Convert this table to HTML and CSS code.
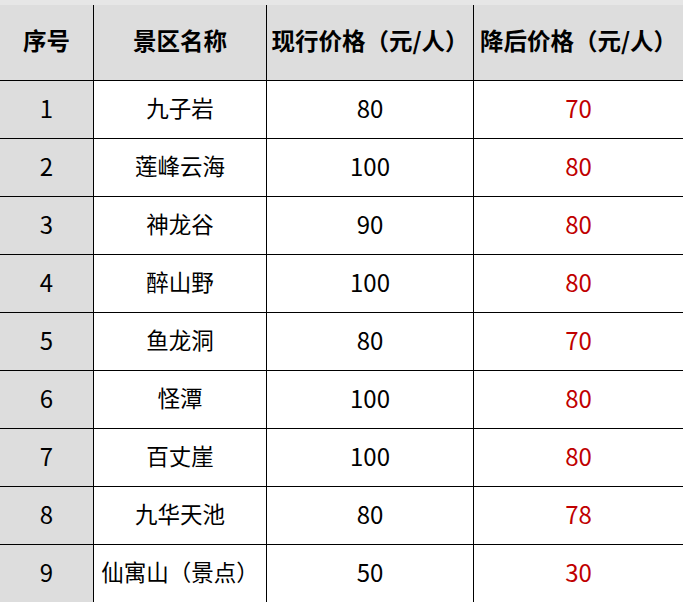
FILE: index.html
```html
<!DOCTYPE html>
<html lang="zh-CN">
<head>
<meta charset="utf-8">
<title>景区价格表</title>
<link rel="stylesheet" href="styles.css">
</head>
<body>
<div class="strip"></div>
<div class="grid">
  <div class="cell head">序号</div>
  <div class="cell head">景区名称</div>
  <div class="cell head">现行价格（元/人）</div>
  <div class="cell head last">降后价格（元/人）</div>

  <div class="cell idx num">1</div><div class="cell">九子岩</div><div class="cell num">80</div><div class="cell num red last">70</div>
  <div class="cell idx num">2</div><div class="cell">莲峰云海</div><div class="cell num">100</div><div class="cell num red last">80</div>
  <div class="cell idx num">3</div><div class="cell">神龙谷</div><div class="cell num">90</div><div class="cell num red last">80</div>
  <div class="cell idx num">4</div><div class="cell">醉山野</div><div class="cell num">100</div><div class="cell num red last">80</div>
  <div class="cell idx num">5</div><div class="cell">鱼龙洞</div><div class="cell num">80</div><div class="cell num red last">70</div>
  <div class="cell idx num">6</div><div class="cell">怪潭</div><div class="cell num">100</div><div class="cell num red last">80</div>
  <div class="cell idx num">7</div><div class="cell">百丈崖</div><div class="cell num">100</div><div class="cell num red last">80</div>
  <div class="cell idx num">8</div><div class="cell">九华天池</div><div class="cell num">80</div><div class="cell num red last">78</div>
  <div class="cell idx num bottom">9</div><div class="cell bottom">仙寓山（景点）</div><div class="cell num bottom">50</div><div class="cell num red last bottom">30</div>
</div>
</body>
</html>
```
FILE: styles.css
```css
html, body {
  margin: 0;
  padding: 0;
  background: #ffffff;
}
body {
  width: 683px;
  height: 602px;
  overflow: hidden;
  font-family: "Noto Sans CJK SC", "Noto Sans", sans-serif;
  color: #000000;
}
.strip {
  height: 5px;
  background: #e6e6e6;
}
.grid {
  display: grid;
  grid-template-columns: 94px 173px 207px 209px;
  grid-template-rows: 76px repeat(8, 58px) 57px;
}
.cell {
  display: flex;
  align-items: center;
  justify-content: center;
  padding-bottom: 4px;
  box-sizing: border-box;
  font-size: 22.5px;
  line-height: 1;
  white-space: nowrap;
  border-right: 1px solid #000000;
  border-bottom: 1px solid #000000;
  background: #ffffff;
}
.cell.last {
  border-right: none;
}
.cell.bottom {
  border-bottom: none;
}
.head {
  background: #dddddd;
  font-weight: bold;
  font-size: 23.5px;
}
.num {
  font-size: 24px;
}
.idx {
  background: #dddddd;
}
.red {
  color: #c00000;
}
```
